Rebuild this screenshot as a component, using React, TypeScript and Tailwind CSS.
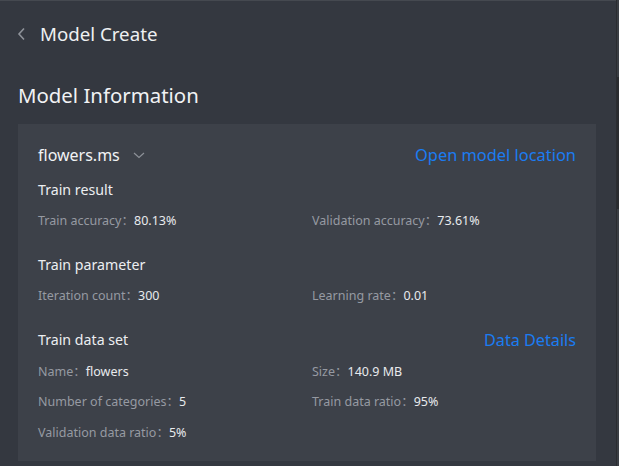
import React from 'react'

const font = {fontFamily: '"Noto Sans", "Noto Sans CJK SC", sans-serif'}

function Field({label, value}: {label: string; value: string}) {
    return (
        <div className="flex items-center h-[14px] text-[12.5px] leading-none">
            <span className="text-[#969aa2]">{label}：</span>
            <span className="text-[#e8eaed]">{value}</span>
        </div>
    )
}

function SectionTitle({children, link}: {children: React.ReactNode; link?: string}) {
    return (
        <div className="flex items-center justify-between h-[20px] leading-none">
            <span className="text-[14.2px] text-[#eceef1]">{children}</span>
            {link && <span className="text-[16.2px] text-[#1b7cf2]">{link}</span>}
        </div>
    )
}

export default function App() {
    return (
        <div className="w-[619px] h-[466px] bg-[#343840] flex overflow-hidden" style={font}>
            <div className="flex-1 flex flex-col border-t border-[#454950]">
                <div className="flex items-center h-[34px] mt-[16px] pl-[17px] leading-none">
                    <svg width="10" height="14" viewBox="0 0 10 14" className="mr-[13px]">
                        <path d="M7 1.5 L2 7 L7 12.5" stroke="#8f939a" strokeWidth="1.6" fill="none" />
                    </svg>
                    <span className="text-[18.7px] text-[#eef0f2]">Model Create</span>
                </div>
                <div className="mt-[32px] pl-[18px] text-[20.4px] text-[#f1f2f4] leading-none h-[24px] flex items-center">
                    Model Information
                </div>
                <div className="ml-[18px] mr-[20px] mt-[17px] h-[337px] bg-[#3d4149] px-[20px] pt-[20px]">
                    <div className="flex items-center justify-between h-[22px] leading-none">
                        <div className="flex items-center">
                            <span className="text-[16px] text-[#f2f3f5]">flowers.ms</span>
                            <svg width="12" height="7" viewBox="0 0 12 7" className="ml-[13px]">
                                <path d="M1 1 L6 5.5 L11 1" stroke="#8d9198" strokeWidth="1.2" fill="none" />
                            </svg>
                        </div>
                        <span className="text-[16.4px] text-[#1b7cf2]">Open model location</span>
                    </div>
                    <div className="mt-[14px]">
                        <SectionTitle>Train result</SectionTitle>
                    </div>
                    <div className="grid grid-cols-[274px_1fr] mt-[14px]">
                        <Field label="Train accuracy" value="80.13%" />
                        <Field label="Validation accuracy" value="73.61%" />
                    </div>
                    <div className="mt-[27px]">
                        <SectionTitle>Train parameter</SectionTitle>
                    </div>
                    <div className="grid grid-cols-[274px_1fr] mt-[14px]">
                        <Field label="Iteration count" value="300" />
                        <Field label="Learning rate" value="0.01" />
                    </div>
                    <div className="mt-[27px]">
                        <SectionTitle link="Data Details">Train data set</SectionTitle>
                    </div>
                    <div className="grid grid-cols-[274px_1fr] gap-y-[16.5px] mt-[15px]">
                        <Field label="Name" value="flowers" />
                        <Field label="Size" value="140.9 MB" />
                        <Field label="Number of categories" value="5" />
                        <Field label="Train data ratio" value="95%" />
                        <Field label="Validation data ratio" value="5%" />
                    </div>
                </div>
            </div>
            <div className="w-[3px] border-l border-[#2b2d31] bg-[#3a3e44] flex flex-col">
                <div className="h-[77px]" />
                <div className="h-[132px] bg-[#2a2c30]" />
            </div>
        </div>
    )
}
